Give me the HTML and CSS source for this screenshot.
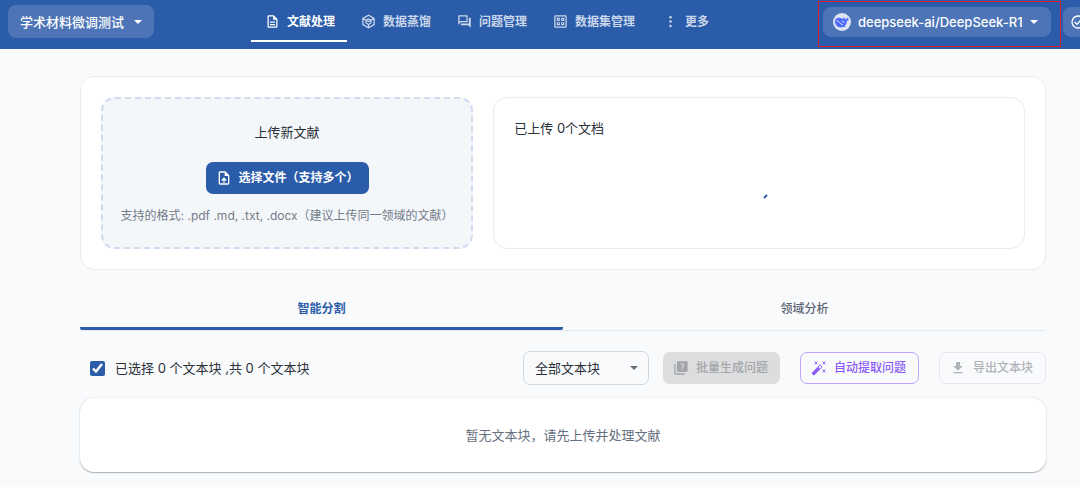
FILE: index.html
```html
<!DOCTYPE html>
<html lang="zh-CN">
<head>
<meta charset="utf-8">
<meta name="viewport" content="width=device-width, initial-scale=1">
<title>文献处理</title>
<link rel="stylesheet" href="styles.css">
</head>
<body>
<header class="topbar">
  <div class="pill project">
    <select class="pill-select" aria-label="项目"><option>学术材料微调测试</option></select>
    <svg class="caret" viewBox="0 0 10 5"><path d="M0 0h10L5 5z"/></svg>
  </div>
  <nav class="nav">
    <a class="nav-item active" href="#" aria-current="page">
      <svg class="icon" viewBox="0 0 24 24"><path d="M8 16h8v2H8zm0-4h8v2H8zm6-10H6c-1.1 0-2 .9-2 2v16c0 1.100.89 2 1.990 2H18c1.100 0 2-.9 2-2V8zm4 18H6V4h7v5h5z"/></svg>
      文献处理
    </a>
    <a class="nav-item" href="#">
      <svg class="icon line" viewBox="0 0 24 24"><path d="M12 2l9 5v10l-9 5-9-5V7zM3 7l5 3M21 7l-5 3M12 17v5M12 8l4 2v4l-4 3-4-3v-4zM8 10l4 2 4-2"/></svg>
      数据蒸馏
    </a>
    <a class="nav-item" href="#">
      <svg class="icon" viewBox="0 0 24 24"><path d="M15 4v7H5.170L4 12.170V4zm1-2H3c-.55 0-1 .45-1 1v14l4-4h10c.55 0 1-.45 1-1V3c0-.55-.45-1-1-1m5 4h-2v9H6v2c0 .55.45 1 1 1h11l4 4V7c0-.55-.45-1-1-1"/></svg>
      问题管理
    </a>
    <a class="nav-item" href="#">
      <svg class="icon" viewBox="0 0 24 24"><path fill-rule="evenodd" d="M4 2h16a2 2 0 0 1 2 2v16a2 2 0 0 1-2 2H4a2 2 0 0 1-2-2V4a2 2 0 0 1 2-2zM4 4v16h16V4zM6 6h5v5H6zM13 6h5v5h-5zM6 13h5v5H6zM13 13h5v5h-5zM8 8v1.500h1.500V8zM14.500 8v1.500H16V8zM8 14.500V16h1.500v-1.500zM14.500 14.500V16H16v-1.500z"/></svg>
      数据集管理
    </a>
    <button class="nav-item more" type="button">
      <svg class="icon" viewBox="0 0 24 24"><circle cx="12" cy="5" r="2"/><circle cx="12" cy="12" r="2"/><circle cx="12" cy="19" r="2"/></svg>
      更多
    </button>
  </nav>
  <div class="actions">
    <div class="highlight">
      <div class="pill model">
        <svg class="avatar" viewBox="0 0 18 18"><circle cx="9" cy="9" r="9" fill="#dde5f3"/><path fill="#4d6bfe" d="M15.900 5.200c-.9.500-1.300 0-1.800-.6-.1.900-.6 1.500-1.400 1.600-1-.4-1.600-1.200-1.800-2.200-.7.600-.8 1.500-.1 2.300L9 5.500C6.300 4.300 3.600 4.600 2.400 6.600c-1.100 2.100-.2 5 1.800 6.600 2 1.500 4.500 1.500 6.300.5.700.5 1.500.5 2.100.1l-1-.9c1.600-1.300 2.300-3.200 2.300-5 1.100-.4 1.900-1.400 2-2.700z"/><path fill="none" stroke="#dde5f3" stroke-width="1" d="M3.600 7.500c2.500.2 3.200 3.900 6.200 4.300M8.800 8.200c1.300-.2 2.200.8 2.300 1.700"/></svg>
        <select class="pill-select" aria-label="模型"><option>deepseek-ai/DeepSeek-R1</option></select>
        <svg class="caret" viewBox="0 0 10 5"><path d="M0 0h10L5 5z"/></svg>
      </div>
    </div>
    <button class="pill task" type="button" aria-label="任务">
      <svg class="task-icon" viewBox="0 0 24 24"><circle cx="12" cy="12" r="9"/><path d="M7 12l3.500 3.500L17 8.500"/></svg>
    </button>
  </div>
</header>

<main class="page">
  <section class="panel">
    <div class="upload">
      <h2 class="title">上传新文献</h2>
      <button class="btn primary" type="button">
        <svg class="icon" viewBox="0 0 24 24"><path d="M14 2H6c-1.100 0-2 .9-2 2v16c0 1.100.89 2 2 2h12c1.100 0 2-.9 2-2V8zm4 18H6V4h7v5h5zM8 15.010l1.410 1.410L11 14.840V19h2v-4.160l1.590 1.590L16 15.010 12.010 11z"/></svg>
        选择文件（支持多个）
      </button>
      <p class="hint">支持的格式: .pdf .md, .txt, .docx（建议上传同一领域的文献）</p>
    </div>
    <div class="documents">
      <h2 class="title">已上传 0个文档</h2>
      <div class="loading">
        <svg class="spinner" viewBox="0 0 28 28" role="img" aria-label="加载中"><path d="M19 22l3-3"/></svg>
      </div>
    </div>
  </section>

  <div class="tabs" role="tablist">
    <button class="tab selected" type="button" role="tab" aria-selected="true">智能分割</button>
    <button class="tab" type="button" role="tab" aria-selected="false">领域分析</button>
  </div>

  <div class="toolbar">
    <label class="select-all">
      <input class="check" type="checkbox" checked>
      已选择 0 个文本块 ,共 0 个文本块
    </label>
    <div class="filter">
      <select class="filter-select" aria-label="筛选"><option>全部文本块</option></select>
      <svg class="caret" viewBox="0 0 10 5"><path d="M0 0h10L5 5z"/></svg>
    </div>
    <button class="btn generate" type="button" disabled>
      <svg class="icon" viewBox="0 0 24 24"><path d="M4 6H2v14c0 1.100.9 2 2 2h14v-2H4z"/><path fill-rule="evenodd" d="M20 2H8c-1.100 0-2 .9-2 2v12c0 1.100.9 2 2 2h12c1.100 0 2-.9 2-2V4c0-1.100-.9-2-2-2m-5.990 13c-.59 0-1.050-.47-1.050-1.050 0-.59.47-1.040 1.050-1.040.59 0 1.040.45 1.040 1.040-.01.58-.45 1.050-1.040 1.050m2.500-6.170c-.63.930-1.230 1.210-1.560 1.810-.13.240-.18.400-.18 1.180h-1.520c0-.41-.06-1.080.26-1.650.41-.73 1.180-1.160 1.630-1.800.48-.68.210-1.940-1.140-1.940-.88 0-1.320.67-1.500 1.230l-1.370-.57C11.510 5.960 12.520 5 13.990 5c1.230 0 2.080.56 2.510 1.260.37.600.58 1.730.01 2.570"/></svg>
      批量生成问题
    </button>
    <button class="btn extract" type="button">
      <svg class="icon" viewBox="0 0 24 24"><path fill-rule="evenodd" d="M7.500 5.600 10 7 8.600 4.500 10 2 7.500 3.400 5 2l1.400 2.500L5 7zm12 9.800L17 14l1.400 2.500L17 19l2.500-1.400L22 19l-1.400-2.500L22 14zM22 2l-2.500 1.400L17 2l1.400 2.500L17 7l2.500-1.400L22 7l-1.400-2.500zm-7.630 5.290a.996.996 0 0 0-1.410 0L1.290 18.960c-.39.390-.39 1.020 0 1.410l2.340 2.340c.39.390 1.020.39 1.410 0L16.700 11.050c.39-.39.39-1.020 0-1.410zm-1.030 5.490-2.120-2.120 2.440-2.440 2.120 2.120z"/></svg>
      自动提取问题
    </button>
    <button class="btn export" type="button" disabled>
      <svg class="icon" viewBox="0 0 24 24"><path d="M19 9h-4V3H9v6H5l7 7zM5 18v2h14v-2z"/></svg>
      导出文本块
    </button>
  </div>

  <section class="empty">暂无文本块，请先上传并处理文献</section>
</main>
</body>
</html>
```
FILE: styles.css
```css
* {
  box-sizing: border-box;
}

body {
  margin: 0;
  background: #f8fafc;
  color: #2b2f36;
  font: 13px/20px Inter, "Noto Sans CJK SC", sans-serif;
}

button,
select {
  margin: 0;
  border: 0;
  background: none;
  color: inherit;
  font: inherit;
}

h2,
p {
  margin: 0;
}

svg {
  flex: none;
  fill: currentColor;
}

.icon {
  width: 16px;
  height: 16px;
}

.line {
  fill: none;
  stroke: currentColor;
  stroke-width: 2;
}

.caret {
  width: 8px;
  height: 4px;
  pointer-events: none;
}

.topbar {
  display: flex;
  height: 49px;
  overflow: hidden;
  background: #2a5caa;
  color: #fff;
}

.pill {
  display: flex;
  align-items: center;
  border-radius: 8px;
  background: #4c74b7;
}

.pill-select {
  appearance: none;
  padding: 0;
}

.project {
  gap: 9px;
  height: 33px;
  margin: 5px 0 0 8px;
  padding: 0 12px;
  font-weight: 500;
}

.nav {
  display: flex;
  height: 42px;
  margin: 0 auto;
}

.nav-item {
  display: flex;
  align-items: center;
  gap: 7px;
  padding: 3px 12px 0 14px;
  border-bottom: 2px solid transparent;
  color: #cbd7ea;
  font-size: 12px;
  font-weight: 600;
  text-decoration: none;
  white-space: nowrap;
}

.nav .icon {
  width: 15px;
  height: 15px;
}

.nav-item.active {
  border-color: #fff;
  color: #fff;
}

.more {
  padding: 3px 12px 0 16px;
}

.actions {
  display: flex;
  align-items: flex-start;
  gap: 2px;
  margin-right: -13px;
}

.highlight {
  margin-top: 1px;
  padding: 5px 9px 9px 4px;
  border: 1px solid #d9212f;
}

.model {
  gap: 7px;
  height: 30px;
  padding: 0 13px 0 10px;
  font-size: 13px;
  font-weight: 500;
}

.avatar {
  width: 18px;
  height: 18px;
}

.task {
  width: 30px;
  height: 30px;
  margin-top: 7px;
  padding: 0 7px;
}

.task-icon {
  width: 16px;
  height: 16px;
  fill: none;
  stroke: #fff;
  stroke-width: 2;
}

.page {
  padding: 27px 34px 14px 80px;
}

.panel {
  display: grid;
  grid-template-columns: 7fr 10fr;
  gap: 20px;
  padding: 20px;
  border: 1px solid #e9ebee;
  border-radius: 14px;
  background: #fff;
}

.title {
  font-size: 13px;
  font-weight: 400;
}

.upload {
  display: flex;
  flex-direction: column;
  align-items: center;
  padding: 23px 16px 21px;
  border: 2px dashed #cfdbf0;
  border-radius: 14px;
  background: #f3f7fa;
}

.btn {
  display: flex;
  align-items: center;
  justify-content: center;
  gap: 7px;
  height: 32px;
  border-radius: 7px;
  font-size: 12px;
  font-weight: 500;
  white-space: nowrap;
}

.primary {
  margin: 20px 0 12px;
  padding: 0 10px;
  background: #2a5caa;
  color: #fff;
  font-weight: 600;
}

.hint {
  color: #747b88;
  font-size: 12px;
}

.documents {
  display: flex;
  flex-direction: column;
  padding: 20px;
  border: 1px solid #ececee;
  border-radius: 14px;
}

.loading {
  display: flex;
  flex: 1;
  align-items: center;
  justify-content: center;
}

.spinner {
  width: 28px;
  height: 28px;
  margin-top: 14px;
  fill: none;
  stroke: #2a5caa;
  stroke-width: 2;
}

.tabs {
  display: flex;
  margin-top: 20px;
  border-bottom: 1px solid #e4e7eb;
}

.tab {
  flex: 1;
  height: 40px;
  padding: 0;
  border-bottom: 3px solid transparent;
  color: #5d6675;
  font-size: 12px;
  font-weight: 500;
}

.tab.selected {
  border-color: #2a5caa;
  border-radius: 2px;
  color: #2a5caa;
  font-weight: 600;
}

.toolbar {
  display: flex;
  align-items: center;
  gap: 20px;
  margin: 20px 0 13px;
}

.select-all {
  display: flex;
  align-items: center;
  gap: 10px;
  margin: 0 auto 0 10px;
}

.check {
  width: 15px;
  height: 15px;
  margin: 0;
  accent-color: #2a5caa;
}

.filter {
  display: flex;
  align-items: center;
  position: relative;
  margin-right: -6px;
}

.filter-select {
  appearance: none;
  width: 126px;
  height: 34px;
  padding: 0 30px 0 11px;
  border: 1px solid #d3d6da;
  border-radius: 7px;
}

.filter .caret {
  position: absolute;
  right: 11px;
  color: #6b6f75;
}

.generate {
  padding: 0 12px 0 10px;
  background: #dcdddf;
  color: #a3a5a8;
}

.extract {
  padding: 0 12px 0 10px;
  border: 1px solid #c0a6fb;
  color: #8b5cf6;
}

.export {
  padding: 0 12px 0 10px;
  border: 1px solid #e5e7ea;
  color: #b0b3b6;
}

.empty {
  padding: 27px;
  border-radius: 14px;
  background: #fff;
  box-shadow: 0 1px 1px #b0b2b5, 0 0 2px #d5d7da;
  color: #66707f;
  text-align: center;
}
```
